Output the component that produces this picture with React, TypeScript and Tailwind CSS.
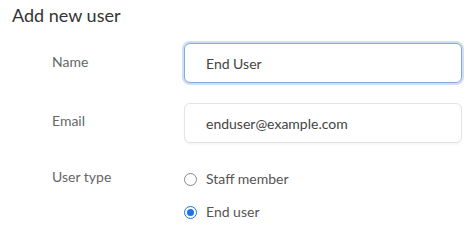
export default function App() {
  return (
    <div className="min-h-screen bg-white pl-3 pt-[2px] font-['Lato','Open_Sans',sans-serif]">
      <h1 className="text-[18px] leading-[26px] text-[#333]">Add new user</h1>

      <div className="mt-[15px] grid grid-cols-[132px_278px] items-center gap-y-5 pl-10">
        <label className="pb-[4px] text-[14px] text-[#666]">Name</label>
        <input
          defaultValue="End User"
          className="h-10 w-full rounded-md border border-[#86a9d9] bg-white px-[21px] text-[14px] text-[#444] shadow-[0_0_0_2px_rgba(120,160,220,0.35)] outline-none"
        />

        <label className="pb-[5px] text-[14px] text-[#666]">Email</label>
        <input
          defaultValue="enduser@example.com"
          className="h-10 w-full rounded-md border border-[#e4e4e4] bg-white px-[21px] text-[14px] text-[#444] shadow-[0_2px_2px_rgba(0,0,0,0.04)] outline-none"
        />

        <label className="self-start pt-[3px] text-[14px] text-[#666]">User type</label>
        <div className="flex flex-col gap-[11px] pt-[5px]">
          <label className="flex items-center gap-[9px] text-[14px] leading-[22px] text-[#555]">
            <span className="h-[13px] w-[13px] rounded-full border border-[#888] bg-white" />
            Staff member
          </label>
          <label className="flex items-center gap-[9px] text-[14px] leading-[22px] text-[#555]">
            <span className="flex h-[13px] w-[13px] items-center justify-center rounded-full border border-[#1a73e8] bg-white">
              <span className="h-[7px] w-[7px] rounded-full bg-[#1a73e8]" />
            </span>
            End user
          </label>
        </div>
      </div>
    </div>
  )
}
